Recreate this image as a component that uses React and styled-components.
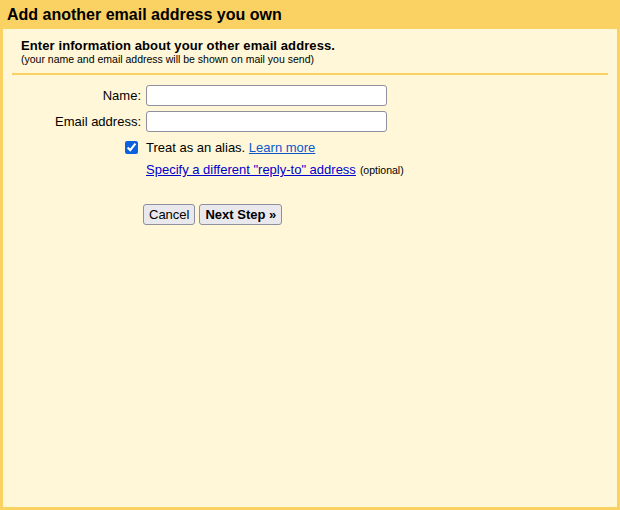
import React, { useState } from 'react';
import styled, { createGlobalStyle } from 'styled-components';

const GlobalStyle = createGlobalStyle`
  html, body {
    margin: 0;
    padding: 0;
    background: #fad163;
  }
  body {
    font-family: Arial, "Liberation Sans", sans-serif;
    font-size: 13px;
    color: #000;
  }
`;

const Frame = styled.div`
  display: flex;
  flex-direction: column;
  width: 620px;
  height: 510px;
  box-sizing: border-box;
  background: #fad163;
  padding: 0 3px 3px 3px;
`;

const TitleBar = styled.h1`
  margin: 0;
  height: 29px;
  box-sizing: border-box;
  padding: 6px 0 0 4px;
  font-size: 16px;
  font-weight: bold;
  line-height: 18px;
`;

const Panel = styled.div`
  flex: 1;
  background: #fff7d7;
  padding: 9px 9px 0 9px;
`;

const Intro = styled.div`
  padding-left: 9px;
`;

const Heading = styled.div`
  font-size: 13px;
  font-weight: bold;
  line-height: 15px;
  letter-spacing: 0.1px;
`;

const Note = styled.div`
  font-size: 10.5px;
  line-height: 12px;
`;

const Rule = styled.div`
  height: 2px;
  margin-top: 8px;
  background: #fad163;
`;

const Form = styled.form`
  margin: 10px 0 0 -9px;
`;

const Row = styled.div`
  display: flex;
  align-items: center;
  gap: 5px;
  margin-top: ${({ $top }) => $top || 0}px;
`;

const LabelCell = styled.label`
  width: 138px;
  text-align: right;
  display: flex;
  justify-content: flex-end;
  align-items: center;
`;

const TextInput = styled.input`
  width: 241px;
  height: 21px;
  box-sizing: border-box;
  border: 1px solid #8f8f9d;
  border-radius: 3px;
  background: #fff;
  padding: 1px 3px;
  font: 13px Arial, "Liberation Sans", sans-serif;
`;

const Check = styled.input`
  width: 13px;
  height: 13px;
  margin: 3px 3px 3px 4px;
  accent-color: #0b61de;
`;

const Link = styled.a`
  color: ${({ $muted }) => ($muted ? '#0b57d0' : '#0000cc')};
  text-decoration: underline;
  cursor: pointer;
`;

const Small = styled.span`
  font-size: 10.5px;
  margin-left: 4px;
`;

const Actions = styled.div`
  display: flex;
  gap: 4px;
  margin: 27px 0 0 140px;
`;

const Button = styled.button`
  height: 21px;
  box-sizing: border-box;
  padding: 0 5px;
  border: 1px solid #8f8f9d;
  border-radius: 3px;
  background: #e9e9ed;
  color: #000;
  font: ${({ $strong }) => ($strong ? 'bold' : 'normal')} 13px Arial, "Liberation Sans", sans-serif;
  cursor: pointer;
`;

export default function App() {
  const [alias, setAlias] = useState(true);

  return (
    <>
      <GlobalStyle />
      <Frame>
        <TitleBar>Add another email address you own</TitleBar>
        <Panel>
          <Intro>
            <Heading>Enter information about your other email address.</Heading>
            <Note>(your name and email address will be shown on mail you send)</Note>
          </Intro>
          <Rule />
          <Form onSubmit={(e) => e.preventDefault()}>
            <Row>
              <LabelCell htmlFor="name">Name:</LabelCell>
              <TextInput id="name" type="text" />
            </Row>
            <Row $top={5}>
              <LabelCell htmlFor="email">Email address:</LabelCell>
              <TextInput id="email" type="text" />
            </Row>
            <Row $top={6}>
              <LabelCell>
                <Check type="checkbox" checked={alias} onChange={() => setAlias(!alias)} />
              </LabelCell>
              <span>
                Treat as an alias. <Link $muted>Learn more</Link>
              </span>
            </Row>
            <Row $top={5}>
              <LabelCell />
              <span>
                <Link>Specify a different "reply-to" address</Link>
                <Small>(optional)</Small>
              </span>
            </Row>
            <Actions>
              <Button type="button">Cancel</Button>
              <Button type="button" $strong>Next Step »</Button>
            </Actions>
          </Form>
        </Panel>
      </Frame>
    </>
  );
}
